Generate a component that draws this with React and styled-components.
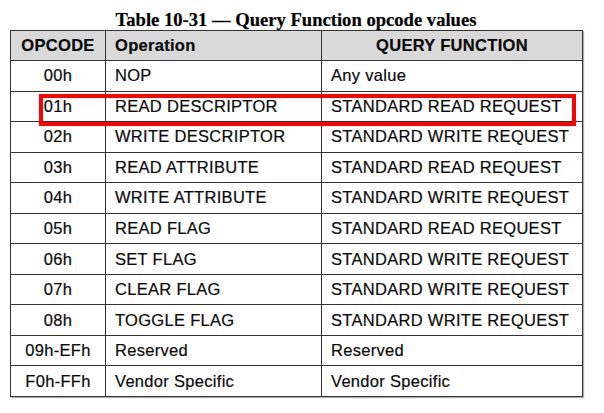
import React from "react";
import styled, { createGlobalStyle } from "styled-components";

const Global = createGlobalStyle`
  html, body { margin: 0; padding: 0; background: #ffffff; }
  body { width: 604px; height: 413px; overflow: hidden; }
`;

const Page = styled.div`
  padding-left: 10px;
  width: 572px;
`;

const Title = styled.div`
  height: 30px;
  box-sizing: border-box;
  padding-top: 10px;
  line-height: 20px;
  text-align: center;
  font-family: "Liberation Serif", "Times New Roman", serif;
  font-weight: bold;
  font-size: 18.6px;
  color: #000;
  white-space: nowrap;
  -webkit-text-stroke: 0.2px #000;
`;

const Wrap = styled.div`
  position: relative;
`;

const Table = styled.table`
  width: 572px;
  table-layout: fixed;
  border-collapse: collapse;
  font-family: "Liberation Sans", Arial, sans-serif;
  font-size: 16.5px;
  letter-spacing: 0.3px;
  color: #0a0a0a;
  -webkit-text-stroke: 0.2px #0a0a0a;
  box-shadow: 1px 1px 1px #b0b0b0;
`;

const HeadRow = styled.tr`
  height: 30px;
  background: #d9d9d9;
`;

const Row = styled.tr`
  height: 30.55px;
`;

const Cell = styled.td`
  border: 1px solid #333;
  padding: 0 0 0 ${(p) => (p.$center ? 0 : 9)}px;
  text-align: ${(p) => (p.$center ? "center" : "left")};
  font-weight: ${(p) => (p.$head ? "bold" : "normal")};
  white-space: nowrap;
  vertical-align: middle;
  line-height: 19px;
`;

const Highlight = styled.div`
  position: absolute;
  left: 29px;
  top: 64px;
  width: 537px;
  height: 32px;
  box-sizing: border-box;
  border: 4px solid #ff0000;
  pointer-events: none;
`;

const rows = [
  ["00h", "NOP", "Any value"],
  ["01h", "READ DESCRIPTOR", "STANDARD READ REQUEST"],
  ["02h", "WRITE DESCRIPTOR", "STANDARD WRITE REQUEST"],
  ["03h", "READ ATTRIBUTE", "STANDARD READ REQUEST"],
  ["04h", "WRITE ATTRIBUTE", "STANDARD WRITE REQUEST"],
  ["05h", "READ FLAG", "STANDARD READ REQUEST"],
  ["06h", "SET FLAG", "STANDARD WRITE REQUEST"],
  ["07h", "CLEAR FLAG", "STANDARD WRITE REQUEST"],
  ["08h", "TOGGLE FLAG", "STANDARD WRITE REQUEST"],
  ["09h-EFh", "Reserved", "Reserved"],
  ["F0h-FFh", "Vendor Specific", "Vendor Specific"],
];

export default function App() {
  return (
    <Page>
      <Global />
      <Title>Table 10-31 — Query Function opcode values</Title>
      <Wrap>
        <Table>
          <colgroup>
            <col style={{ width: 95 }} />
            <col style={{ width: 216 }} />
            <col style={{ width: 261 }} />
          </colgroup>
          <thead>
            <HeadRow>
              <Cell as="th" $head $center>OPCODE</Cell>
              <Cell as="th" $head>Operation</Cell>
              <Cell as="th" $head $center>QUERY FUNCTION</Cell>
            </HeadRow>
          </thead>
          <tbody>
            {rows.map((r) => (
              <Row key={r[0]}>
                <Cell $center>{r[0]}</Cell>
                <Cell>{r[1]}</Cell>
                <Cell>{r[2]}</Cell>
              </Row>
            ))}
          </tbody>
        </Table>
        <Highlight />
      </Wrap>
    </Page>
  );
}
